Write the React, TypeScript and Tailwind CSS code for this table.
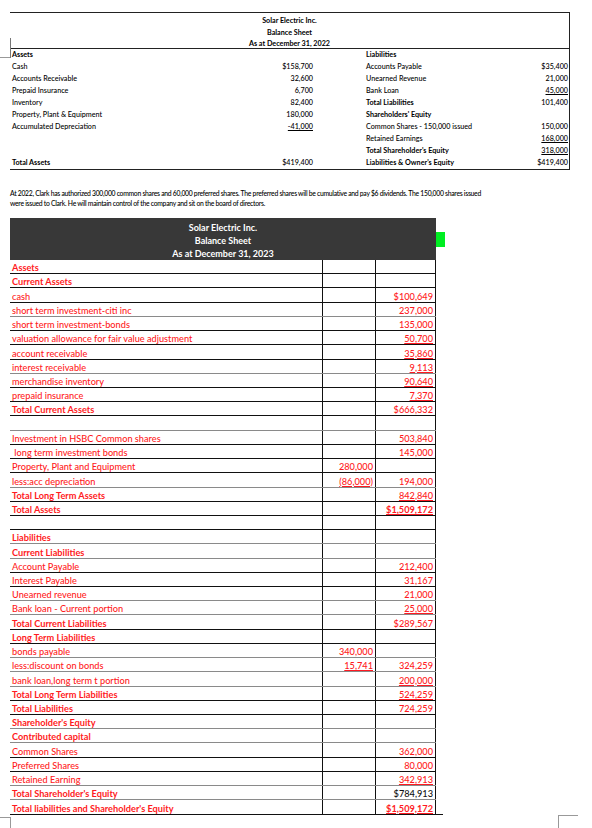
import React from 'react';

type TopRow = [string, boolean, string, boolean, string, boolean, string, boolean];

// label, bold, value, underline ... for both halves
const topRows: TopRow[] = [
  ['Assets', true, '', false, 'Liabilities', true, '', false],
  ['Cash', false, '$158,700', false, 'Accounts Payable', false, '$35,400', false],
  ['Accounts Receivable', false, '32,600', false, 'Unearned Revenue', false, '21,000', false],
  ['Prepaid Insurance', false, '6,700', false, 'Bank Loan', false, '45,000', true],
  ['Inventory', false, '82,400', false, 'Total Liabilities', true, '101,400', false],
  ['Property, Plant & Equipment', false, '180,000', false, "Shareholders' Equity", true, '', false],
  ['Accumulated Depreciation', false, '-41,000', true, 'Common Shares - 150,000 issued', false, '150,000', false],
  ['', false, '', false, 'Retained Earnings', false, '168,000', true],
  ['', false, '', false, "Total Shareholder's Equity", true, '318,000', true],
  ['Total Assets', true, '$419,400', false, "Liabilities & Owner's Equity", true, '$419,400', false],
];

interface Row {
  label: string;
  b?: boolean;
  c2?: string;
  c2u?: boolean;
  c3?: string;
  c3u?: boolean;
  c3b?: boolean;
  black?: boolean;
  gray?: boolean;
}

const rows: Row[] = [
  { label: 'Assets', b: true },
  { label: 'Current Assets', b: true },
  { label: 'cash', c3: '$100,649' },
  { label: 'short term investment-citi inc', c3: '237,000', gray: true },
  { label: 'short term investment-bonds', c3: '135,000' },
  { label: 'valuation allowance for fair value adjustment', c3: '50,700', c3u: true },
  { label: 'account receivable', c3: '35,860', c3u: true },
  { label: 'interest receivable', c3: '9,113', c3u: true, gray: true },
  { label: 'merchandise inventory', c3: '90,640', c3u: true },
  { label: 'prepaid insurance', c3: '7,370', c3u: true },
  { label: 'Total Current Assets', b: true, c3: '$666,332' },
  { label: '', gray: true },
  { label: 'Investment in HSBC Common shares', c3: '503,840' },
  { label: '\u00a0long term investment bonds', c3: '145,000' },
  { label: 'Property, Plant and Equipment', c2: '280,000' },
  { label: 'less:acc depreciation', c2: '(86,000)', c2u: true, c3: '194,000', gray: true },
  { label: 'Total Long Term Assets', b: true, c3: '842,840', c3u: true },
  { label: 'Total Assets', b: true, c3: '$1,509,172', c3u: true, c3b: true },
  { label: '' },
  { label: 'Liabilities', b: true, gray: true },
  { label: 'Current Liabilities', b: true, gray: true },
  { label: 'Account Payable', c3: '212,400' },
  { label: 'Interest Payable', c3: '31,167' },
  { label: 'Unearned revenue', c3: '21,000', gray: true },
  { label: 'Bank loan - Current portion', c3: '25,000', c3u: true, gray: true },
  { label: 'Total Current Liabilities', b: true, c3: '$289,567' },
  { label: 'Long Term Liabilities', b: true },
  { label: 'bonds payable', c2: '340,000', gray: true },
  { label: 'less:discount on bonds', c2: '15,741', c2u: true, c3: '324,259', gray: true },
  { label: 'bank loan,long term t portion', c3: '200,000', c3u: true, gray: true },
  { label: 'Total Long Term Liabilities', b: true, c3: '524,259', c3u: true },
  { label: 'Total Liabilities', b: true, c3: '724,259' },
  { label: "Shareholder's Equity", b: true, gray: true },
  { label: 'Contributed capital', b: true, gray: true },
  { label: 'Common Shares', c3: '362,000' },
  { label: 'Preferred Shares', c3: '80,000' },
  { label: 'Retained Earning', c3: '342,913', c3u: true, gray: true },
  { label: "Total Shareholder's Equity", b: true, c3: '$784,913', black: true, gray: true },
  { label: "Total liabilities and Shareholder's Equity", b: true, c3: '$1,509,172', c3u: true, c3b: true },
];

const ul = 'underline decoration-1 underline-offset-[1px]';

export default function App() {
  return (
    <div className="relative w-[592px] h-[828px] overflow-hidden bg-white text-black font-['Lato',sans-serif]">
      {/* crop marks */}
      <div className="absolute left-[10px] top-[38px] w-[1px] h-[20px] bg-[#777]" />
      <div className="absolute left-0 top-[57px] w-[10px] h-[1px] bg-[#999]" />
      <div className="absolute left-[10px] top-[817px] w-[1px] h-[11px] bg-[#999]" />
      <div className="absolute left-0 top-[817px] w-[10px] h-[1px] bg-[#999]" />
      <div className="absolute left-[558px] top-[815px] w-[20px] h-[1px] bg-[#999]" />
      <div className="absolute left-[558px] top-[815px] w-[1px] h-[13px] bg-[#999]" />

      <div className="pt-[12px] pl-[10px]">
        {/* 2022 balance sheet */}
        <div className="w-[560px] border-t border-r border-b border-[#222] text-[7.2px] font-medium">
          <div className="h-[36px] border-b border-[#222] flex flex-col items-center pt-[2px] font-bold">
            <div className="h-[11.5px] leading-[11.5px]">Solar Electric Inc.</div>
            <div className="h-[11.5px] leading-[11.5px]">Balance Sheet</div>
            <div className="h-[11.5px] leading-[11.5px]">As at December 31, 2022</div>
          </div>
          <div className="grid grid-cols-[240px_63px_53px_155px_48px]">
            {topRows.map((r, i) => (
              <React.Fragment key={i}>
                <div className={`h-[12px] leading-[12px] pl-[2px] ${r[1] ? 'font-bold' : ''}`}>{r[0]}</div>
                <div className="h-[12px] leading-[12px] text-right">
                  <span className={r[3] ? ul : ''}>{r[2]}</span>
                </div>
                <div />
                <div className={`h-[12px] leading-[12px] ${r[5] ? 'font-bold' : ''}`}>{r[4]}</div>
                <div className="h-[12px] leading-[12px] text-right pr-[1px]">
                  <span className={r[7] ? ul : ''}>{r[6]}</span>
                </div>
              </React.Fragment>
            ))}
          </div>
        </div>

        {/* note */}
        <div className="mt-[18px] text-[6.8px] tracking-[-0.28px] font-medium leading-[10px] whitespace-nowrap">
          <div>
            At 2022, Clark has authorized 300,000 common shares and 60,000 preferred shares. The preferred shares will be cumulative and pay $6 dividends. The 150,000 shares issued
          </div>
          <div>were issued to Clark. He will maintain control of the company and sit on the board of directors.</div>
        </div>

        {/* 2023 balance sheet */}
        <div className="mt-[10px] flex items-start">
          <div className="w-[426px] h-[42px] bg-[#383838] text-white font-bold text-[9px] flex flex-col items-center justify-center pt-[2px]">
            <div className="h-[13px] leading-[13px]">Solar Electric Inc.</div>
            <div className="h-[13px] leading-[13px]">Balance Sheet</div>
            <div className="h-[13px] leading-[13px]">As at December 31, 2023</div>
          </div>
          <div className="mt-[14px] w-[9px] h-[15px] bg-[#00ee22]" />
        </div>
        <div className="w-[433px] text-[9.2px] font-medium text-[#ff1a22]">
          {rows.map((r, i) => (
            <div
              key={i}
              className={`flex w-[426px] h-[14.22px] box-border border-b ${r.gray ? 'border-[#8a8a8a]' : 'border-[#111]'} ${
                i === rows.length - 1 ? 'w-[433px]' : ''
              }`}
            >
              <div className={`w-[312px] flex items-end pl-[2px] leading-[11px] whitespace-pre ${r.b ? 'font-bold' : ''}`}>
                {r.label}
              </div>
              <div className="w-[53px] border-l border-[#111] flex items-end justify-end pr-[2px] leading-[11px]">
                <span className={r.c2u ? ul : ''}>{r.c2}</span>
              </div>
              <div className="w-[61px] border-l border-r border-[#111] flex items-end justify-end pr-[2px] leading-[11px]">
                <span className={`${r.c3u ? ul : ''} ${r.c3b ? 'font-bold' : ''} ${r.black ? 'text-[#111]' : ''}`}>
                  {r.c3}
                </span>
              </div>
            </div>
          ))}
        </div>
      </div>
    </div>
  );
}
